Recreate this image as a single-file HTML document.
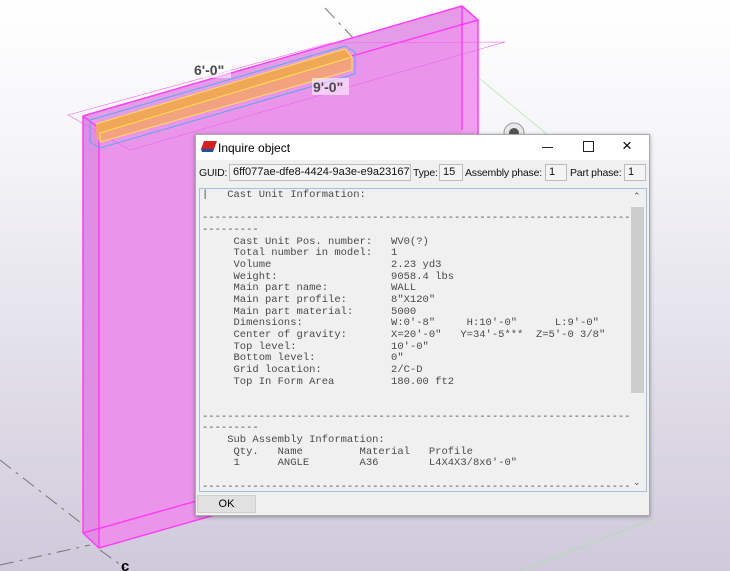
<!DOCTYPE html>
<html><head><meta charset="utf-8"><style>
body{margin:0;width:730px;height:571px;overflow:hidden;position:relative;font-family:"Liberation Sans",sans-serif;background:linear-gradient(#ffffff 0%,#f3f2f6 30%,#dedbe6 70%,#cfcadb 100%);}
svg.bg{position:absolute;left:0;top:0}
#dlg{position:absolute;left:195px;top:134px;width:453px;height:380px;background:#f0f0f0;border:1px solid #aaa;box-shadow:0 1px 4px rgba(0,0,0,.35);}
#title{height:25px;background:#fff;position:relative;font-size:12px;}
#tb{position:absolute;top:25px;left:0;right:0;height:26px;font-size:10.5px;color:#111;letter-spacing:-0.2px}
.lb{position:absolute;top:7px;white-space:nowrap;z-index:2}
.bx{position:absolute;top:4px;height:17px;border:1px solid #bbb;background:#f4f4f4;box-sizing:border-box;padding:1px 3px;font-size:11px;overflow:hidden;white-space:nowrap;letter-spacing:0}
#ta{position:absolute;left:3px;top:53px;width:446px;height:302px;border:1px solid #9cc3e5;background:#f0f0f0;overflow:hidden}
pre{margin:0;position:absolute;left:2px;top:1px;font-family:"Liberation Mono",monospace;font-size:10.5px;line-height:11.67px;color:#4a4a4a}
#sb{position:absolute;right:1px;top:0;width:15px;height:302px;background:#f0f0f0}
#thumb{position:absolute;left:1px;top:18px;width:13px;height:186px;background:#cdcdcd}
#ok{position:absolute;left:1px;top:360px;width:59px;height:18px;background:#e1e1e1;border:1px solid #cfcfcf;font-size:11px;text-align:center;line-height:17px;box-sizing:border-box}
</style></head><body>
<svg class="bg" width="730" height="571">
<g stroke="#777" stroke-width="1" stroke-dasharray="14 6 3 6" fill="none">
<line x1="325" y1="8" x2="440" y2="130"/>
<line x1="0" y1="460" x2="90" y2="530"/>
<line x1="0" y1="565" x2="90" y2="545"/>
<line x1="100" y1="550" x2="125" y2="568"/>
</g>
<line x1="440" y1="46" x2="548" y2="135" stroke="#aee6ae" stroke-width="0.7"/>
<line x1="520" y1="571" x2="650" y2="520" stroke="#a9dfa9" stroke-width="0.7"/>
<polygon points="83,116 462,6 478,20 99,128" fill="#e49ce8"/>
<polygon points="83,116 99,128 99,548 83,533" fill="#df8ee3"/>
<polygon points="99,128 478,20 478,440 99,548" fill="#ea95ea"/>
<polygon points="462,6 478,20 478,440 462,430" fill="#ee9fee"/>
<g stroke="#ff3ff5" stroke-width="1.5" fill="none">
<polyline points="83,533 83,116 462,6 478,20 99,128 83,116"/>
<line x1="99" y1="128" x2="99" y2="548"/>
<line x1="478" y1="20" x2="478" y2="440"/>
<line x1="462" y1="6" x2="462" y2="130"/>
<polyline points="83,533 99,548 478,440"/>
<line x1="83" y1="533" x2="200" y2="500"/>
</g>
<polygon points="68,115 330,43 505,42 130,150" fill="none" stroke="#f060f0" stroke-width="0.6"/>
<polygon points="90,120 345,46 355,52 355,74 100,148 90,142" fill="none" stroke="#55a8ee" stroke-width="1"/>
<polygon points="96,124 345,49 352,57 352,70 100,142 96,136" fill="#f2a27e"/>
<polygon points="96,124 345,49 352,57 100,133" fill="#f0a858"/>
<polyline points="96,124 345,49 352,57 352,70 100,142 100,133 352,57" fill="none" stroke="#ffe050" stroke-width="1"/>
<rect x="193" y="62" width="38" height="16" fill="#fff" opacity=".55"/>
<text x="194" y="75" font-family="Liberation Sans" font-weight="bold" font-size="14" fill="#4a4a4a">6'-0"</text>
<rect x="312" y="78" width="37" height="17" fill="#fff" opacity=".55"/>
<text x="313" y="92" font-family="Liberation Sans" font-weight="bold" font-size="14" fill="#4a4a4a">9'-0"</text>
<circle cx="514" cy="133" r="10" fill="#e8e8ea" stroke="#999"/>
<circle cx="514" cy="133" r="5" fill="#555"/>
<text x="121" y="571" font-family="Liberation Sans" font-weight="bold" font-size="15" fill="#000">c</text>
</svg>
<div id="dlg">
<div id="title">
<svg style="position:absolute;left:5px;top:6px" width="16" height="12"><polygon points="3,0 16,0 13,8 0,8" fill="#d42020"/><polygon points="0,8 13,8 12,11 1,11" fill="#2050a0"/></svg>
<span style="position:absolute;left:22px;top:6px">Inquire object</span>
<span style="position:absolute;left:346px;top:12px;width:11px;height:1px;background:#222"></span>
<span style="position:absolute;left:387px;top:6px;width:9px;height:9px;border:1px solid #222"></span>
<span style="position:absolute;left:426px;top:1px;font-size:17px;font-weight:300">×</span>
</div>
<div id="tb">
<span class="lb" style="left:3px">GUID:</span>
<div class="bx" style="left:33px;width:182px">6ff077ae-dfe8-4424-9a3e-e9a2316715</div>
<span class="lb" style="left:217px">Type:</span>
<div class="bx" style="left:243px;width:24px">15</div>
<span class="lb" style="left:269px">Assembly phase:</span>
<div class="bx" style="left:349px;width:22px">1</div>
<span class="lb" style="left:374px">Part phase:</span>
<div class="bx" style="left:428px;width:22px">1</div>
</div>
<div id="ta">
<pre>|   Cast Unit Information:

--------------------------------------------------------------------
---------
     Cast Unit Pos. number:   WV0(?)
     Total number in model:   1
     Volume                   2.23 yd3
     Weight:                  9058.4 lbs
     Main part name:          WALL
     Main part profile:       8"X120"
     Main part material:      5000
     Dimensions:              W:0'-8"     H:10'-0"      L:9'-0"
     Center of gravity:       X=20'-0"   Y=34'-5***  Z=5'-0 3/8"
     Top level:               10'-0"
     Bottom level:            0"
     Grid location:           2/C-D
     Top In Form Area         180.00 ft2


--------------------------------------------------------------------
---------
    Sub Assembly Information:
     Qty.   Name         Material   Profile
     1      ANGLE        A36        L4X4X3/8x6'-0"

--------------------------------------------------------------------</pre>
<div id="sb"><span style="position:absolute;left:3px;top:2px;font-size:9px;color:#555">⌃</span><div id="thumb"></div><span style="position:absolute;left:3px;bottom:3px;font-size:9px;color:#555">⌄</span></div>
</div>
<div id="ok">OK</div>
</div>
</body></html>
